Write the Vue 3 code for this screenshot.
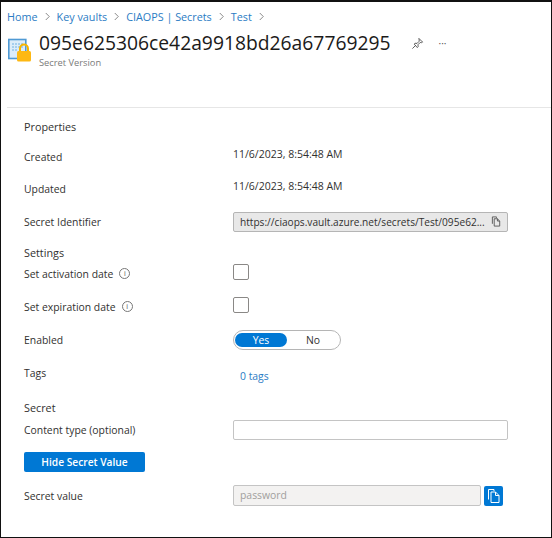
<script setup>
const crumbs = ['Home', 'Key vaults', 'CIAOPS | Secrets', 'Test']
</script>

<template>
  <div class="page">
    <nav class="crumbs">
      <template v-for="c in crumbs" :key="c">
        <a class="crumb">{{ c }}</a>
        <svg class="chev" viewBox="0 0 8 10" width="7" height="9"><path d="M2 1l4 4-4 4" fill="none" stroke="#777" stroke-width="1"/></svg>
      </template>
    </nav>
    <header class="head">
      <svg class="vault" viewBox="0 0 24 24" width="24" height="24">
        <rect x="0.8" y="1.500" width="17" height="19" fill="#dcecf9" stroke="#4f9ad4" stroke-width="1.600"/>
        <g fill="#a6cfee">
          <rect x="4" y="5" width="2" height="2"/><rect x="7" y="5" width="2" height="2"/><rect x="10" y="5" width="2" height="2"/><rect x="13" y="5" width="2" height="2"/>
          <rect x="4" y="8" width="2" height="2"/><rect x="7" y="8" width="2" height="2"/><rect x="10" y="8" width="2" height="2"/><rect x="13" y="8" width="2" height="2"/>
          <rect x="4" y="11" width="2" height="2"/><rect x="7" y="11" width="2" height="2"/>
        </g>
        <path d="M12 14v-3.500a4 4 0 0 1 8 0V14" fill="none" stroke="#f7b500" stroke-width="2"/>
        <rect x="9" y="13" width="14" height="10.500" rx="1.500" fill="#fdb813"/>
      </svg>
      <div class="titles">
        <div class="title-row">
          <h1 class="title">095e625306ce42a9918bd26a67769295</h1>
          <svg class="pin" viewBox="0 0 14 14" width="13" height="13"><path d="M8.500 1.500l4 4-1 .6-1.600-.2-2.400 2.400.2 2.200-.9.9L3.400 7.600l.9-.9 2.200.2 2.400-2.400-.2-1.600zM5.200 8.800L1.500 12.500" fill="none" stroke="#555" stroke-width="1"/></svg>
          <span class="more">···</span>
        </div>
        <div class="sub">Secret Version</div>
      </div>
    </header>
    <div class="rule"></div>

    <main class="form">
      <div class="section">Properties</div>
      <div class="row created"><span>Created</span><span class="date">11/6/2023, 8:54:48 AM</span></div>
      <div class="row updated"><span>Updated</span><span class="date">11/6/2023, 8:54:48 AM</span></div>
      <div class="row ident">
        <span>Secret Identifier</span>
        <div class="idbox">
          <span class="idtext">https://ciaops.vault.azure.net/secrets/Test/095e62...</span>
          <svg viewBox="0 0 12 12" width="11" height="11"><path d="M1.500 8.500V1H6v1M3.500 3H7l2.500 2.500V11h-6zM7 3v2.500h2.500" fill="none" stroke="#555" stroke-width="1"/></svg>
        </div>
      </div>
      <div class="section settings">Settings</div>
      <div class="row opt">
        <span class="lab">Set activation date <i class="info">i</i></span>
        <span class="check"></span>
      </div>
      <div class="row opt">
        <span class="lab">Set expiration date <i class="info">i</i></span>
        <span class="check"></span>
      </div>
      <div class="row opt">
        <span>Enabled</span>
        <div class="toggle"><span class="on">Yes</span><span class="off">No</span></div>
      </div>
      <div class="row opt"><span>Tags</span><a class="link">0 tags</a></div>
      <div class="section secret">Secret</div>
      <div class="row content">
        <span>Content type (optional)</span>
        <div class="input"></div>
      </div>
      <button class="primary">Hide Secret Value</button>
      <div class="row value">
        <span>Secret value</span>
        <div class="valwrap">
          <div class="input disabled">password</div>
          <span class="copy">
            <svg viewBox="0 0 14 16" width="14" height="16"><path d="M1.500 11.500v-10H7V3M4 4h4.500L12 7.500v7H4zM8.500 4v3.500H12" fill="none" stroke="#fff" stroke-width="1"/></svg>
          </span>
        </div>
      </div>
    </main>
  </div>
</template>

<style scoped>
.page {
  box-sizing: border-box;
  width: 552px;
  height: 538px;
  border: 1px solid #111;
  border-top-width: 2px;
  background: #fff;
  font-family: "Open Sans", "Noto Sans", sans-serif;
  font-size: 10.400px;
  color: #323130;
  overflow: hidden;
}
.crumbs {
  display: flex;
  align-items: center;
  gap: 6px;
  padding: 6px 0 0 6px;
  height: 22px;
  box-sizing: border-box;
}
.crumb { color: #2b7cc4; font-size: 10.800px; }
.head { display: flex; padding: 6px 0 0 7px; height: 68px; box-sizing: border-box; gap: 7px; align-items: flex-start; }
.vault { margin-top: 8px; flex: none; }
.titles { display: flex; flex-direction: column; }
.title-row { display: flex; align-items: center; }
.title { margin: 0; font-size: 19.300px; font-weight: 400; color: #1b1a19; line-height: 26px; white-space: nowrap; }
.pin { margin-left: 20px; }
.more { margin-left: 15px; color: #555; font-size: 10px; }
.sub { font-size: 9.300px; color: #7a7a7a; line-height: 13px; }
.rule { height: 1px; background: #e6e6e6; margin: 15px 0 0 6px; }
.form { padding: 11px 43px 0 23px; }
.section { line-height: 16px; font-size: 10.800px; }
.row { display: grid; grid-template-columns: 209px minmax(0, 1fr); align-items: center; }
.created { height: 32px; margin-top: 6px; }
.updated { height: 32px; }
.date { font-size: 10.500px; margin-bottom: 6px; }
.ident { height: 33px; }
.idbox {
  box-sizing: border-box;
  height: 20px;
  background: #e8e8e8;
  border: 1px solid #b5b5b5;
  border-radius: 2px;
  display: flex;
  align-items: center;
  justify-content: space-between;
  padding: 0 5px 0 6px;
}
.idtext { white-space: nowrap; font-size: 10.150px; }
.settings { margin-top: 7px; margin-bottom: -4px; }
.opt { height: 33px; }
.lab { display: flex; align-items: center; gap: 4px; }
.info {
  width: 9px; height: 9px; border: 1px solid #777; border-radius: 50%;
  font: 7px/9px "Open Sans", sans-serif; text-align: center; color: #555;
  margin-left: 2px;
}
.check { width: 16px; height: 16px; border: 1px solid #8a8886; border-radius: 2px; box-sizing: border-box; margin-bottom: 3px; }
.toggle {
  box-sizing: border-box;
  width: 108px; height: 20px; border: 1px solid #b5b5b5; border-radius: 10px;
  display: flex; align-items: center; padding: 0 1px;
}
.on { width: 52px; height: 14px; line-height: 14px; background: #0078d4; color: #fff; border-radius: 7px; text-align: center; }
.off { flex: 1; text-align: center; }
.link { color: #2b7cc4; margin-left: 7px; margin-top: 6px; }
.secret { margin-top: 11px; }
.content { height: 28px; }
.input { box-sizing: border-box; height: 20px; border: 1px solid #c4c4c4; border-radius: 2px; background: #fff; }
.primary {
  display: block; box-sizing: border-box; width: 121px; height: 20px; margin-top: 8px;
  background: #0078d4; color: #fff; border: 0; border-radius: 2px;
  font: 600 10.200px "Open Sans", sans-serif; padding: 0;
}
.value { height: 21px; margin-top: 13px; }
.valwrap { display: flex; align-items: center; gap: 3px; }
.disabled { width: 248px; height: 21px; background: #f3f2f1; color: #a19f9d; padding-left: 6px; line-height: 19px; }
.copy { width: 19px; height: 20px; background: #0078d4; border-radius: 2px; display: flex; align-items: center; justify-content: center; }
</style>
